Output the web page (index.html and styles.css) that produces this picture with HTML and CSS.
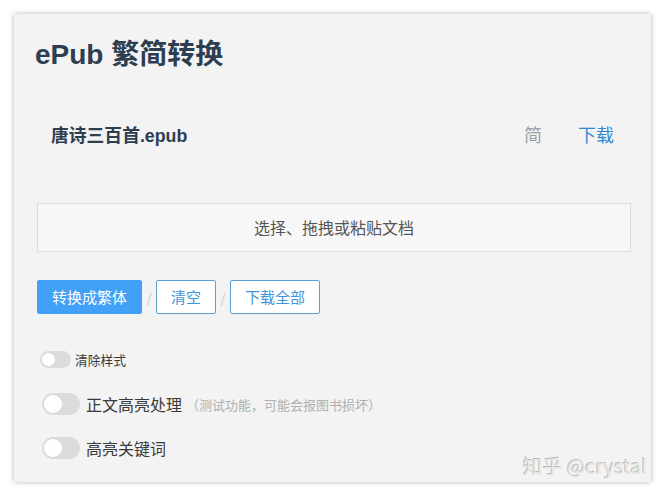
FILE: index.html
```html
<!DOCTYPE html>
<html lang="zh-CN">
<head>
<meta charset="utf-8">
<link rel="stylesheet" href="styles.css">
</head>
<body>
<div class="card">
  <h1 class="title">ePub 繁简转换</h1>
  <div class="file-row">
    <span class="file-name">唐诗三百首.epub</span>
    <span class="file-actions">
      <span class="mode">简</span>
      <a class="download">下载</a>
    </span>
  </div>
  <div class="dropzone">选择、拖拽或粘贴文档</div>
  <div class="buttons">
    <button class="btn btn-primary">转换成繁体</button>
    <span class="sep">/</span>
    <button class="btn btn-plain btn-clear">清空</button>
    <span class="sep">/</span>
    <button class="btn btn-plain btn-all">下载全部</button>
  </div>
  <div class="opt opt-small">
    <span class="switch switch-small"><span class="knob"></span></span>
    <span class="opt-label">清除样式</span>
  </div>
  <div class="opt opt-large">
    <span class="switch"><span class="knob"></span></span>
    <span class="opt-label">正文高亮处理</span><span class="note">（测试功能，可能会报图书损坏）</span>
  </div>
  <div class="opt opt-large opt-last">
    <span class="switch"><span class="knob"></span></span>
    <span class="opt-label">高亮关键词</span>
  </div>
</div>
<div class="watermark">知乎 @crystal</div>
</body>
</html>
```
FILE: styles.css
```css
html, body {
  margin: 0;
  padding: 0;
  background: #ffffff;
}
body {
  font-family: "Noto Sans CJK SC", "Noto Sans", sans-serif;
  position: relative;
  width: 666px;
  height: 496px;
  overflow: hidden;
}
.card {
  margin: 14px;
  width: 637px;
  height: 468px;
  box-sizing: border-box;
  padding: 20px 20px 0 23px;
  background: #f3f3f3;
  box-shadow: 0 0 5px rgba(0, 0, 0, 0.3);
}
.title {
  margin: 0 0 0 -2px;
  font-family: "Liberation Sans", "Noto Sans CJK SC", sans-serif;
  font-size: 28px;
  line-height: 42px;
  font-weight: bold;
  color: #2c3e50;
}
.file-row {
  margin: 38px 17px 0 14px;
  height: 40px;
  display: flex;
  align-items: center;
  justify-content: space-between;
}
.file-name {
  font-family: "Liberation Sans", "Noto Sans CJK SC", sans-serif;
  font-size: 17.8px;
  font-weight: bold;
  color: #2c3e50;
}
.file-actions {
  display: flex;
  gap: 36px;
  font-size: 18px;
}
.mode {
  color: #9aa0a4;
}
.download {
  color: #2d8ad2;
}
.dropzone {
  margin-top: 49px;
  height: 49px;
  box-sizing: border-box;
  border: 1px solid #dcdcdc;
  background: #f7f7f7;
  display: flex;
  align-items: center;
  justify-content: center;
  font-size: 16px;
  line-height: 20px;
  padding-bottom: 2px;
  color: #555;
}
.buttons {
  margin-top: 28px;
  display: flex;
  align-items: center;
  height: 34px;
}
.btn {
  height: 34px;
  box-sizing: border-box;
  font-family: "Noto Sans CJK SC", sans-serif;
  font-size: 15px;
  padding: 0 0 1px;
  border-radius: 2px;
}
.btn-primary {
  width: 105px;
  background: #42a0f7;
  border: 1px solid #42a0f7;
  color: #ffffff;
}
.btn-plain {
  background: #ffffff;
  border: 1px solid #5aa0d2;
  color: #3f94da;
}
.btn-clear {
  width: 60px;
}
.btn-all {
  width: 90px;
}
.sep {
  width: 14px;
  text-align: center;
  color: #c8c8c8;
  font-size: 13px;
}
.opt {
  display: flex;
  align-items: center;
  color: #3a3a3a;
}
.opt-small {
  margin-top: 37px;
  margin-left: 3px;
  height: 17px;
  gap: 4px;
  font-size: 12.75px;
}
.opt-large {
  margin-top: 22px;
  margin-left: 5px;
  height: 22px;
  gap: 6px;
  font-size: 16px;
}
.opt-small + .opt-large {
  margin-top: 25px;
}
.switch {
  position: relative;
  width: 38px;
  height: 22px;
  border-radius: 11px;
  background: #dcdcdc;
  flex: none;
}
.switch-small {
  width: 31px;
  height: 17px;
  border-radius: 9px;
}
.knob {
  position: absolute;
  left: 2px;
  top: 2px;
  width: 18px;
  height: 18px;
  border-radius: 50%;
  background: #ffffff;
}
.switch-small .knob {
  width: 13px;
  height: 13px;
}
.note {
  font-size: 13px;
  color: #b0b0b0;
  margin-left: -2px;
}
.watermark {
  position: absolute;
  left: 523px;
  top: 451px;
  font-family: "Noto Sans CJK SC", "Noto Sans", sans-serif;
  font-size: 19.5px;
  color: #e6e6e6;
  text-shadow: -1px -1px 0 #bcbcbc;
  letter-spacing: 0.2px;
}
```
